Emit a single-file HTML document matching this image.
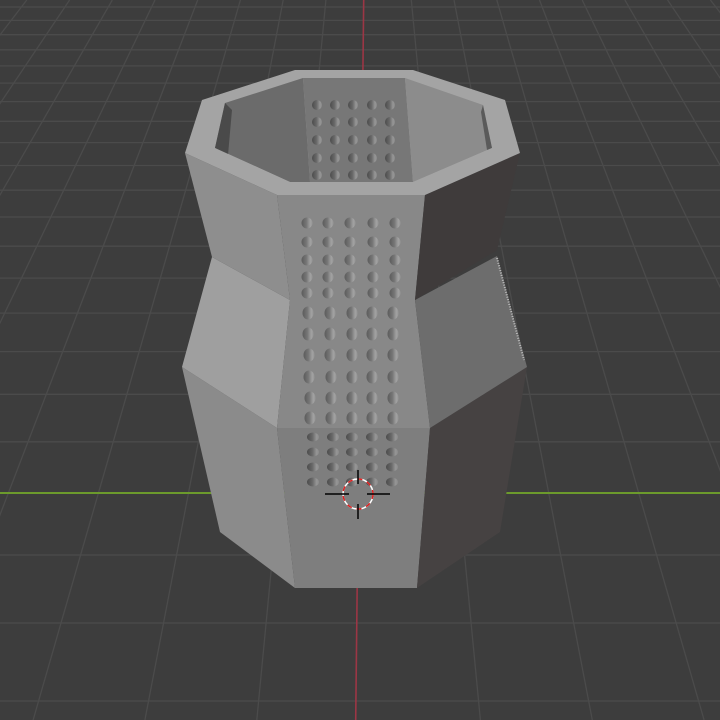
<!DOCTYPE html>
<html><head><style>html,body{margin:0;padding:0;background:#3d3d3d;width:720px;height:720px;overflow:hidden}</style></head>
<body>
<svg width="720" height="720" viewBox="0 0 720 720" xmlns="http://www.w3.org/2000/svg">
<defs>
<linearGradient id="dot" x1="0" y1="0" x2="1" y2="0">
<stop offset="0" stop-color="#5c5c5c"/><stop offset="0.45" stop-color="#767676"/><stop offset="0.8" stop-color="#a2a2a2"/><stop offset="1" stop-color="#959595"/>
</linearGradient>
<linearGradient id="dotd" x1="0" y1="0" x2="1" y2="0">
<stop offset="0" stop-color="#4c4c4c"/><stop offset="0.45" stop-color="#686868"/><stop offset="0.8" stop-color="#969696"/><stop offset="1" stop-color="#8a8a8a"/>
</linearGradient>
</defs>
<rect width="720" height="720" fill="#3d3d3d"/>
<g stroke="#4b4b4b" stroke-width="1.3">
<line x1="0" y1="7" x2="720" y2="7"/><line x1="0" y1="20.4" x2="720" y2="20.4"/><line x1="0" y1="34.7" x2="720" y2="34.7"/><line x1="0" y1="49.8" x2="720" y2="49.8"/><line x1="0" y1="65.9" x2="720" y2="65.9"/><line x1="0" y1="83.1" x2="720" y2="83.1"/><line x1="0" y1="101.6" x2="720" y2="101.6"/><line x1="0" y1="121.3" x2="720" y2="121.3"/><line x1="0" y1="142.6" x2="720" y2="142.6"/><line x1="0" y1="165.5" x2="720" y2="165.5"/><line x1="0" y1="190.2" x2="720" y2="190.2"/><line x1="0" y1="217" x2="720" y2="217"/><line x1="0" y1="246.2" x2="720" y2="246.2"/><line x1="0" y1="278.1" x2="720" y2="278.1"/><line x1="0" y1="313.1" x2="720" y2="313.1"/><line x1="0" y1="351.6" x2="720" y2="351.6"/><line x1="0" y1="394.3" x2="720" y2="394.3"/><line x1="0" y1="441.8" x2="720" y2="441.8"/><line x1="0" y1="555" x2="720" y2="555"/><line x1="0" y1="623" x2="720" y2="623"/><line x1="0" y1="701" x2="720" y2="701"/>
<line x1="-15.9" y1="0" x2="-637.9" y2="720"/><line x1="26.8" y1="0" x2="-526.1" y2="720"/><line x1="69.6" y1="0" x2="-414.3" y2="720"/><line x1="112.3" y1="0" x2="-302.4" y2="720"/><line x1="155" y1="0" x2="-190.6" y2="720"/><line x1="197.7" y1="0" x2="-78.8" y2="720"/><line x1="240.4" y1="0" x2="33.1" y2="720"/><line x1="283.2" y1="0" x2="144.9" y2="720"/><line x1="325.9" y1="0" x2="256.8" y2="720"/>
<line x1="411.3" y1="0" x2="480.4" y2="720"/><line x1="454" y1="0" x2="592.3" y2="720"/><line x1="496.8" y1="0" x2="704.1" y2="720"/><line x1="539.5" y1="0" x2="816" y2="720"/><line x1="582.2" y1="0" x2="928" y2="720"/><line x1="624.9" y1="0" x2="1040" y2="720"/><line x1="667.6" y1="0" x2="1152" y2="720"/><line x1="710.4" y1="0" x2="1264" y2="720"/><line x1="753" y1="0" x2="1376" y2="720"/>
</g>
<line x1="0" y1="493" x2="720" y2="493" stroke="#6c9a2c" stroke-width="2"/>
<line x1="363.7" y1="0" x2="355.7" y2="720" stroke="#9c3645" stroke-width="1.6"/>

<polygon points="182,367 277,428 295,588 220,532" fill="#8b8b8b"/>
<polygon points="277,428 430,428 417,588 295,588" fill="#7e7e7e"/>
<polygon points="430,428 527,367 500,532 417,588" fill="#464242"/>
<polygon points="212,257 290,300 277,428 182,367" fill="#9f9f9f"/>
<polygon points="290,300 415,300 430,428 277,428" fill="#888888"/>
<polygon points="415,300 497,256 527,367 430,428" fill="#6d6d6d"/>
<polyline points="497,258 524,360" stroke="#bbbbbb" stroke-width="2" stroke-dasharray="1 1.5" fill="none"/>
<polygon points="185,153 277,195 290,300 212,257" fill="#8e8e8e"/>
<polygon points="277,195 425,195 415,300 290,300" fill="#888888"/>
<polygon points="425,195 520,153 497,250 415,300" fill="#3f3b3b"/>
<polygon points="185,153 202,100 295,70 413,70 505,100 520,153 425,195 277,195" fill="#a4a4a4"/>
<polygon points="215,148 225,103 303,78 310,182 290,182" fill="#6b6b6b"/>
<polygon points="303,78 405,78 413,182 310,182" fill="#777777"/>
<polygon points="405,78 483,105 492,148 413,182" fill="#8c8c8c"/>
<polygon points="215,148 225,103 232,110 228,155" fill="#4a4a4a"/>
<polygon points="483,105 492,148 487,150 481,112" fill="#5a5a5a"/>
<polygon points="215,148 290,182 413,182 492,148 493,152 413,186 290,186 214,152" fill="#a4a4a4"/>

<g fill="url(#dotd)">
<circle cx="317" cy="105" r="5"/><circle cx="335" cy="105" r="5"/><circle cx="353" cy="105" r="5"/><circle cx="372" cy="105" r="5"/><circle cx="390" cy="105" r="5"/>
<circle cx="317" cy="122" r="5"/><circle cx="335" cy="122" r="5"/><circle cx="353" cy="122" r="5"/><circle cx="372" cy="122" r="5"/><circle cx="390" cy="122" r="5"/>
<circle cx="317" cy="140" r="5"/><circle cx="335" cy="140" r="5"/><circle cx="353" cy="140" r="5"/><circle cx="372" cy="140" r="5"/><circle cx="390" cy="140" r="5"/>
<circle cx="317" cy="158" r="5"/><circle cx="335" cy="158" r="5"/><circle cx="353" cy="158" r="5"/><circle cx="372" cy="158" r="5"/><circle cx="390" cy="158" r="5"/>
<circle cx="317" cy="175" r="5"/><circle cx="335" cy="175" r="5"/><circle cx="353" cy="175" r="5"/><circle cx="372" cy="175" r="5"/><circle cx="390" cy="175" r="5"/>
</g>
<g fill="url(#dot)">
<circle cx="307" cy="223" r="5.5"/><circle cx="328" cy="223" r="5.5"/><circle cx="350" cy="223" r="5.5"/><circle cx="373" cy="223" r="5.5"/><circle cx="395" cy="223" r="5.5"/>
<circle cx="307" cy="242" r="5.5"/><circle cx="328" cy="242" r="5.5"/><circle cx="350" cy="242" r="5.5"/><circle cx="373" cy="242" r="5.5"/><circle cx="395" cy="242" r="5.5"/>
<circle cx="307" cy="260" r="5.5"/><circle cx="328" cy="260" r="5.5"/><circle cx="350" cy="260" r="5.5"/><circle cx="373" cy="260" r="5.5"/><circle cx="395" cy="260" r="5.5"/>
<circle cx="307" cy="277" r="5.5"/><circle cx="328" cy="277" r="5.5"/><circle cx="350" cy="277" r="5.5"/><circle cx="373" cy="277" r="5.5"/><circle cx="395" cy="277" r="5.5"/>
<circle cx="307" cy="293" r="5.5"/><circle cx="328" cy="293" r="5.5"/><circle cx="350" cy="293" r="5.5"/><circle cx="373" cy="293" r="5.5"/><circle cx="395" cy="293" r="5.5"/>
<ellipse cx="308" cy="313" rx="5.5" ry="6.5"/><ellipse cx="330" cy="313" rx="5.5" ry="6.5"/><ellipse cx="352" cy="313" rx="5.5" ry="6.5"/><ellipse cx="372" cy="313" rx="5.5" ry="6.5"/><ellipse cx="393" cy="313" rx="5.5" ry="6.5"/>
<ellipse cx="308" cy="334" rx="5.5" ry="6.5"/><ellipse cx="330" cy="334" rx="5.5" ry="6.5"/><ellipse cx="352" cy="334" rx="5.5" ry="6.5"/><ellipse cx="372" cy="334" rx="5.5" ry="6.5"/><ellipse cx="393" cy="334" rx="5.5" ry="6.5"/>
<ellipse cx="309" cy="355" rx="5.5" ry="6.5"/><ellipse cx="330" cy="355" rx="5.5" ry="6.5"/><ellipse cx="352" cy="355" rx="5.5" ry="6.5"/><ellipse cx="372" cy="355" rx="5.5" ry="6.5"/><ellipse cx="393" cy="355" rx="5.5" ry="6.5"/>
<ellipse cx="309" cy="377" rx="5.5" ry="6.5"/><ellipse cx="331" cy="377" rx="5.5" ry="6.5"/><ellipse cx="352" cy="377" rx="5.5" ry="6.5"/><ellipse cx="372" cy="377" rx="5.5" ry="6.5"/><ellipse cx="393" cy="377" rx="5.5" ry="6.5"/>
<ellipse cx="310" cy="398" rx="5.5" ry="6.5"/><ellipse cx="331" cy="398" rx="5.5" ry="6.5"/><ellipse cx="352" cy="398" rx="5.5" ry="6.5"/><ellipse cx="372" cy="398" rx="5.5" ry="6.5"/><ellipse cx="393" cy="398" rx="5.5" ry="6.5"/>
<ellipse cx="310" cy="418" rx="5.5" ry="6.5"/><ellipse cx="331" cy="418" rx="5.5" ry="6.5"/><ellipse cx="352" cy="418" rx="5.5" ry="6.5"/><ellipse cx="372" cy="418" rx="5.5" ry="6.5"/><ellipse cx="393" cy="418" rx="5.5" ry="6.5"/>
</g>
<g fill="url(#dotd)">
<ellipse cx="313" cy="437" rx="6" ry="4.5"/><ellipse cx="333" cy="437" rx="6" ry="4.5"/><ellipse cx="352" cy="437" rx="6" ry="4.5"/><ellipse cx="372" cy="437" rx="6" ry="4.5"/><ellipse cx="392" cy="437" rx="6" ry="4.5"/>
<ellipse cx="313" cy="452" rx="6" ry="4.5"/><ellipse cx="333" cy="452" rx="6" ry="4.5"/><ellipse cx="352" cy="452" rx="6" ry="4.5"/><ellipse cx="372" cy="452" rx="6" ry="4.5"/><ellipse cx="392" cy="452" rx="6" ry="4.5"/>
<ellipse cx="313" cy="467" rx="6" ry="4.5"/><ellipse cx="333" cy="467" rx="6" ry="4.5"/><ellipse cx="352" cy="467" rx="6" ry="4.5"/><ellipse cx="372" cy="467" rx="6" ry="4.5"/><ellipse cx="392" cy="467" rx="6" ry="4.5"/>
<ellipse cx="313" cy="482" rx="6" ry="4.5"/><ellipse cx="333" cy="482" rx="6" ry="4.5"/><ellipse cx="352" cy="482" rx="6" ry="4.5"/><ellipse cx="372" cy="482" rx="6" ry="4.5"/><ellipse cx="392" cy="482" rx="6" ry="4.5"/>
</g>
<circle cx="358" cy="494" r="15" fill="none" stroke="#ffffff" stroke-width="1.5"/>
<circle cx="358" cy="494" r="15" fill="none" stroke="#e02020" stroke-width="1.5" stroke-dasharray="5 5"/>
<g stroke="#000" stroke-width="1.5">
<line x1="358" y1="470" x2="358" y2="484"/><line x1="358" y1="504" x2="358" y2="519"/>
<line x1="325" y1="494" x2="349" y2="494"/><line x1="367" y1="494" x2="390" y2="494"/>
</g>
</svg>
</body></html>
